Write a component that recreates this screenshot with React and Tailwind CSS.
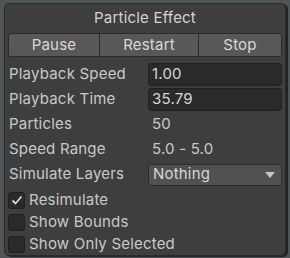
export default function App() {
  const rows = [
    { label: "Playback Speed", kind: "input", value: "1.00" },
    { label: "Playback Time", kind: "input", value: "35.79" },
    { label: "Particles", kind: "text", value: "50" },
    { label: "Speed Range", kind: "text", value: "5.0 - 5.0" },
    { label: "Simulate Layers", kind: "select", value: "Nothing" },
  ];
  const checks = [
    { label: "Resimulate", on: true },
    { label: "Show Bounds", on: false },
    { label: "Show Only Selected", on: false },
  ];

  return (
    <div
      className="w-[290px] h-[258px] bg-[#4d5556] pt-[3px] pl-[4px] overflow-hidden text-[15px] tracking-[0.2px] text-[#c9c9c9]"
      style={{ fontFamily: "Inter, 'Noto Sans', sans-serif" }}
    >
      <div className="w-[282px] h-[253px] rounded-[5px] bg-[#3e3e3e] border border-[#2a2a2a] shadow-[2px_1px_0_#232323] flex flex-col">
        {/* title */}
        <div className="h-[29px] flex items-center justify-center text-[#d4d4d4]">Particle Effect</div>

        {/* play controls */}
        <div className="mx-[3px] h-[24px] flex rounded-[3px] border border-[#2b2b2b] bg-[#585858] overflow-hidden">
          <button className="w-[91px] flex items-center justify-center border-r border-[#2b2b2b] text-[#d8d8d8]">Pause</button>
          <button className="w-[99px] flex items-center justify-center border-r border-[#2b2b2b] text-[#d8d8d8]">Restart</button>
          <button className="flex-1 flex items-center justify-center text-[#d8d8d8]">Stop</button>
        </div>

        {/* fields */}
        <div className="mt-[5px] flex flex-col">
          {rows.map((r) => (
            <div key={r.label} className="h-[25px] flex items-center">
              <div className="w-[143px] pl-[4px]">{r.label}</div>
              {r.kind === "input" && (
                <div className="w-[134px] h-[23px] rounded-[3px] bg-[#2a2a2a] border border-[#202020] flex items-center pl-[3px] text-[#d6d6d6]">
                  {r.value}
                </div>
              )}
              {r.kind === "text" && <div className="pl-[4px]">{r.value}</div>}
              {r.kind === "select" && (
                <div className="w-[134px] h-[22px] rounded-[3px] bg-[#515151] border border-[#2b2b2b] flex items-center justify-between pl-[4px] pr-[6px] text-[#d6d6d6]">
                  <span>{r.value}</span>
                  <svg width="10" height="6" viewBox="0 0 10 6">
                    <path d="M0 0 L10 0 L5 6 Z" fill="#c4c4c4" />
                  </svg>
                </div>
              )}
            </div>
          ))}
        </div>

        {/* toggles */}
        <div className="mt-[2px] flex flex-col">
          {checks.map((c) => (
            <div key={c.label} className="h-[22px] flex items-center gap-[4px] pl-[3px]">
              <div className="w-[17px] h-[17px] rounded-[3px] bg-[#2a2a2a] border border-[#1f1f1f] flex items-center justify-center">
                {c.on && (
                  <svg width="12" height="10" viewBox="0 0 12 10">
                    <path d="M1.5 5.5 L4.5 8.5 L10.5 1.5" stroke="#d6d6d6" strokeWidth="1.8" fill="none" />
                  </svg>
                )}
              </div>
              <span>{c.label}</span>
            </div>
          ))}
        </div>
      </div>
    </div>
  );
}
